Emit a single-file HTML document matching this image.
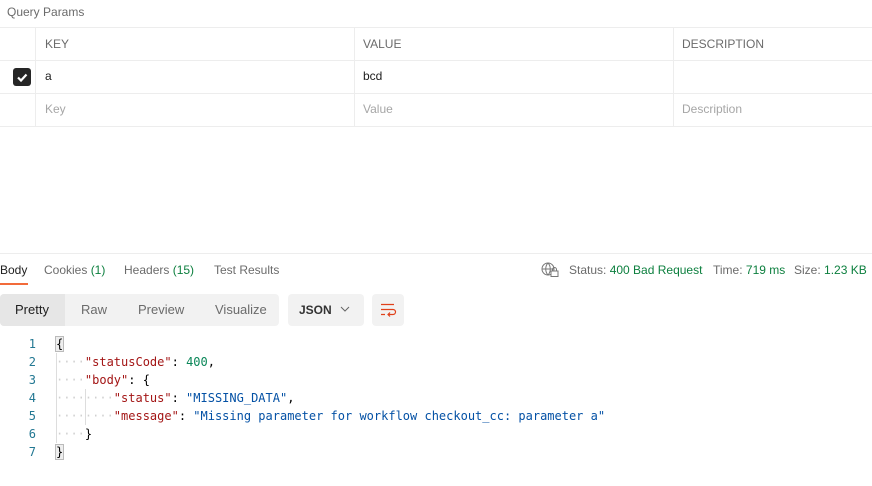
<!DOCTYPE html>
<html><head><style>
*{box-sizing:border-box;margin:0;padding:0}
body{width:872px;height:486px;background:#fff;font-family:"Liberation Sans",Arial,sans-serif;font-size:12px;color:#212121;position:relative;overflow:hidden}
.a{position:absolute}
.hl{position:absolute;left:0;width:872px;height:1px;background:#ededed}
.vl{position:absolute;width:1px;background:#ededed}
.gray{color:#6b6b6b}
.ph{color:#a6a6a6}
.code{font-family:"DejaVu Sans Mono",monospace;font-size:12px;line-height:18px;white-space:pre}
.k{color:#a31515}.s{color:#0451a5}.n{color:#098658}.ln{color:#237893}
.d{color:#d0d0d0}
.g{color:#0c7f3e}
</style></head><body>
<div class="a gray" style="left:7px;top:5px;font-size:12px">Query Params</div>
<div class="hl" style="top:27px"></div>
<div class="hl" style="top:60px"></div>
<div class="hl" style="top:93px"></div>
<div class="hl" style="top:126px"></div>
<div class="vl" style="left:35px;top:27px;height:100px"></div>
<div class="vl" style="left:354px;top:27px;height:100px"></div>
<div class="vl" style="left:673px;top:27px;height:100px"></div>
<div class="a gray" style="left:45px;top:37px">KEY</div>
<div class="a gray" style="left:363px;top:37px">VALUE</div>
<div class="a gray" style="left:682px;top:37px">DESCRIPTION</div>
<div class="a" style="left:13px;top:68px;width:18px;height:18px;background:#262626;border-radius:3px"></div>
<svg class="a" style="left:13px;top:68px" width="18" height="18"><path d="M5 9.5l3 3 5.5-6" stroke="#fff" stroke-width="2.2" fill="none"/></svg>
<div class="a" style="left:45px;top:69px">a</div>
<div class="a" style="left:363px;top:69px">bcd</div>
<div class="a ph" style="left:45px;top:102px">Key</div>
<div class="a ph" style="left:363px;top:102px">Value</div>
<div class="a ph" style="left:682px;top:102px">Description</div>

<div class="hl" style="top:253px"></div>
<div class="a" style="left:0;top:263px">Body</div>
<div class="a" style="left:0;top:283px;width:28px;height:2px;background:#f26b3a"></div>
<div class="a gray" style="left:44px;top:263px">Cookies <span class="g">(1)</span></div>
<div class="a gray" style="left:124px;top:263px">Headers <span class="g">(15)</span></div>
<div class="a gray" style="left:214px;top:263px">Test Results</div>
<svg class="a" style="left:541px;top:262px" width="18" height="16" fill="none" stroke="#777" stroke-width="1"><circle cx="7" cy="7" r="6"/><path d="M1 7h12M7 1c-3 3-3 9 0 12M7 1c3 3 3 9 0 12"/><rect x="10" y="9" width="7" height="5.5" fill="#fff"/><path d="M11.5 9V7.5a2 2 0 014 0V9"/></svg>
<div class="a gray" style="left:569px;top:263px">Status: <span class="g">400 Bad Request</span></div>
<div class="a gray" style="left:713px;top:263px">Time: <span class="g">719 ms</span></div>
<div class="a gray" style="left:794px;top:263px">Size: <span class="g">1.23 KB</span></div>

<div class="a" style="left:0;top:294px;width:279px;height:32px;background:#f2f2f2;border-radius:4px"></div>
<div class="a" style="left:0;top:294px;width:65px;height:32px;background:#e6e6e6;border-radius:4px 0 0 4px"></div>
<div class="a" style="left:15px;top:302px;font-size:13px">Pretty</div>
<div class="a gray" style="left:81px;top:302px;font-size:13px">Raw</div>
<div class="a gray" style="left:138px;top:302px;font-size:13px">Preview</div>
<div class="a gray" style="left:215px;top:302px;font-size:13px">Visualize</div>
<div class="a" style="left:288px;top:294px;width:76px;height:32px;background:#f2f2f2;border-radius:4px"></div>
<div class="a" style="left:299px;top:303px;font-weight:bold;color:#333;font-size:12px">JSON</div>
<svg class="a" style="left:340px;top:305px" width="10" height="8"><path d="M1 2l4 4 4-4" stroke="#666" fill="none"/></svg>
<div class="a" style="left:372px;top:294px;width:32px;height:32px;background:#f2f2f2;border-radius:4px"></div>
<svg class="a" style="left:379px;top:302px" width="18" height="16" fill="none" stroke="#e0411b" stroke-width="1.2"><path d="M2 2.5h13M2 7.5h12a2.5 2.5 0 010 5H9M11 10.5l-2 2 2 2M2 12.5h4"/></svg>

<div class="a code ln" style="left:24px;top:335px;text-align:right;width:12px">1
2
3
4
5
6
7</div>
<div class="a code" style="left:56px;top:335px;color:#000"><span style="background:#eee;outline:1px solid #bbb">{</span>
<span class="d">····</span><span class="k">"statusCode"</span>: <span class="n">400</span>,
<span class="d">····</span><span class="k">"body"</span>: {
<span class="d">········</span><span class="k">"status"</span>: <span class="s">"MISSING_DATA"</span>,
<span class="d">········</span><span class="k">"message"</span>: <span class="s">"Missing parameter for workflow checkout_cc: parameter a"</span>
<span class="d">····</span>}
<span style="background:#eee;outline:1px solid #bbb">}</span></div>
<div class="vl" style="left:56px;top:353px;height:90px;background:#ddd"></div>
<div class="vl" style="left:85px;top:389px;height:36px;background:#ddd"></div>
</body></html>
